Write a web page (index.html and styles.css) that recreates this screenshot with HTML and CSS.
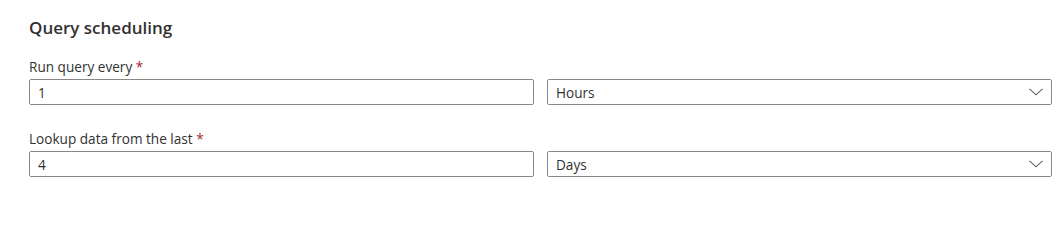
FILE: index.html
```html
<!DOCTYPE html>
<html lang="en">
<head>
<meta charset="utf-8">
<title>Query scheduling</title>
<link rel="stylesheet" href="styles.css">
</head>
<body>
<section class="panel">
  <h2 class="title">Query scheduling</h2>
  <div class="field">
    <label class="label" for="run">Run query every <span class="req">*</span></label>
    <div class="row">
      <input class="input" id="run" type="text" value="1">
      <div class="select"><span class="select-text">Hours</span>
        <svg class="chev" width="14" height="8" viewBox="0 0 14 8"><path d="M0.5 0.8 L7 6.8 L13.5 0.8" fill="none" stroke="#605e5c" stroke-width="1.1"/></svg>
      </div>
    </div>
  </div>
  <div class="field">
    <label class="label" for="lookup">Lookup data from the last <span class="req">*</span></label>
    <div class="row">
      <input class="input" id="lookup" type="text" value="4">
      <div class="select"><span class="select-text">Days</span>
        <svg class="chev" width="14" height="8" viewBox="0 0 14 8"><path d="M0.5 0.8 L7 6.8 L13.5 0.8" fill="none" stroke="#605e5c" stroke-width="1.1"/></svg>
      </div>
    </div>
  </div>
</section>
</body>
</html>
```
FILE: styles.css
```css
html, body {
  margin: 0;
  padding: 0;
  background: #ffffff;
}
body {
  font-family: "Open Sans", "Noto Sans", "Liberation Sans", sans-serif;
  color: #323130;
}
.panel {
  padding: 16px 8px 0 29px;
}
.title {
  margin: 0 0 17px 0;
  font-size: 17px;
  font-weight: 600;
  line-height: 24px;
  color: #323130;
}
.field {
  margin-bottom: 24px;
}
.label {
  display: block;
  font-size: 13.6px;
  line-height: 20px;
  margin-bottom: 2px;
  color: #323130;
}
.req {
  color: #a4262c;
}
.row {
  display: grid;
  grid-template-columns: 1fr 1fr;
  column-gap: 13px;
}
.input, .select {
  box-sizing: border-box;
  height: 26px;
  border: 1px solid #8a8886;
  border-radius: 2px;
  background: #fff;
  font-family: inherit;
  font-size: 13.6px;
  color: #323130;
  padding: 0 8px;
  margin: 0;
  width: 100%;
  outline: none;
}
.select {
  display: flex;
  align-items: center;
  justify-content: space-between;
  padding-right: 8px;
}
.chev {
  display: block;
}
```
